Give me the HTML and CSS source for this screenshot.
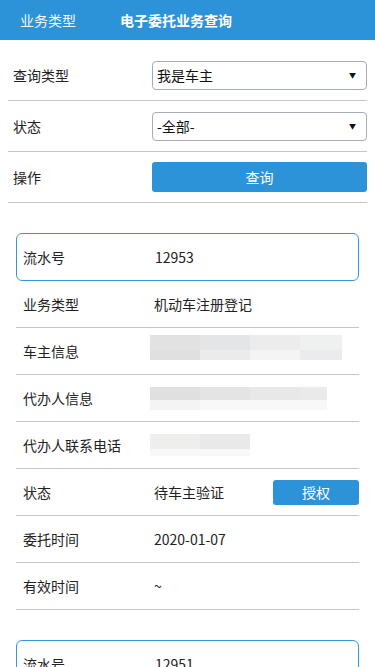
FILE: index.html
```html
<!DOCTYPE html>
<html lang="zh-CN">

<head>
    <meta charset="UTF-8">
    <meta name="viewport" content="width=device-width, initial-scale=1.0">
    <title>电子委托业务查询</title>
    <link rel="stylesheet" href="styles.css">
</head>

<body>
    <header class="cabecera">
        <span class="tab">业务类型</span>
        <span class="tab activo">电子委托业务查询</span>
    </header>

    <form class="filtro">
        <div class="fila">
            <label>查询类型</label>
            <div class="selector">
                <select>
                    <option>我是车主</option>
                    <option>我是代办人</option>
                </select>
            </div>
        </div>
        <div class="fila">
            <label>状态</label>
            <div class="selector">
                <select>
                    <option>-全部-</option>
                </select>
            </div>
        </div>
        <div class="fila">
            <label>操作</label>
            <button type="button" class="boton boton-ancho">查询</button>
        </div>
    </form>

    <section class="lista">
        <div class="registro">
            <div class="caja">
                <span class="nombre">流水号</span>
                <span class="valor">12953</span>
            </div>
            <div class="item">
                <span class="nombre">业务类型</span>
                <span class="valor">机动车注册登记</span>
            </div>
            <div class="item">
                <span class="nombre">车主信息</span>
                <span class="mosaico m-dueno">
                    <i></i><i></i><i></i><i></i>
                    <i></i><i></i><i></i><i></i>
                </span>
            </div>
            <div class="item">
                <span class="nombre">代办人信息</span>
                <span class="mosaico m-agente">
                    <i></i><i></i><i></i><i></i>
                    <i></i><i></i><i></i><i></i>
                </span>
            </div>
            <div class="item">
                <span class="nombre">代办人联系电话</span>
                <span class="mosaico m-tel">
                    <i></i><i></i>
                    <i></i><i></i>
                </span>
            </div>
            <div class="item">
                <span class="nombre">状态</span>
                <span class="valor">待车主验证</span>
                <button type="button" class="boton boton-chico">授权</button>
            </div>
            <div class="item">
                <span class="nombre">委托时间</span>
                <span class="valor">2020-01-07</span>
            </div>
            <div class="item">
                <span class="nombre">有效时间</span>
                <span class="valor">~</span>
            </div>
        </div>

        <div class="registro">
            <div class="caja">
                <span class="nombre">流水号</span>
                <span class="valor">12951</span>
            </div>
            <div class="item">
                <span class="nombre">业务类型</span>
                <span class="valor">机动车注册登记</span>
            </div>
        </div>
    </section>
</body>

</html>
```

FILE: styles.css
```css
body {
    margin: 0;
    font-family: "Noto Sans CJK SC", "Noto Sans", sans-serif;
    font-size: 14px;
    color: #222;
    background: #fff;
}
.cabecera {
    height: 40px;
    background: #2d93d9;
    display: flex;
    align-items: center;
    padding-left: 20px;
    gap: 44px;
}
.tab {
    color: #f2f7fc;
    font-size: 14px;
}
.activo {
    color: #fff;
    font-weight: bold;
}
.filtro {
    margin: 10px 8px 0;
}
.fila {
    height: 50px;
    border-bottom: 1px solid #c6c6c6;
    display: flex;
    align-items: center;
}
.fila label {
    width: 139px;
    padding-left: 5px;
}
.selector {
    flex: 1;
    position: relative;
}
.selector select {
    width: 100%;
    height: 29px;
    margin: 0;
    padding: 0 4px;
    border: 1px solid #a6acb6;
    border-radius: 4px;
    background: #fff;
    font: inherit;
    color: #111;
    appearance: none;
    -webkit-appearance: none;
}
.selector::after {
    content: "▼";
    position: absolute;
    right: 11px;
    top: 9px;
    font-size: 7px;
    color: #111;
    pointer-events: none;
}
.boton {
    border: 0;
    background: #2d93d9;
    color: #fff;
    font: inherit;
    border-radius: 3px;
    padding: 0;
}
.boton-ancho {
    flex: 1;
    height: 30px;
}
.boton-chico {
    width: 86px;
    height: 25px;
    margin-left: auto;
}
.lista {
    margin: 30px 16px 0;
}
.registro {
    margin-bottom: 30px;
}
.caja,
.item {
    display: flex;
    align-items: center;
}
.caja {
    height: 46px;
    border: 1px solid #3a96db;
    border-radius: 6px;
}
.item {
    height: 46px;
    border-bottom: 1px solid #c6c6c6;
}
.nombre {
    width: 132px;
    padding-left: 6px;
    flex-shrink: 0;
}
.item .nombre {
    padding-left: 7px;
    width: 131px;
}
.mosaico {
    display: grid;
    grid-template-columns: repeat(4, 50px);
    margin-left: -4px;
}
.mosaico i {
    display: block;
}
.m-dueno {
    grid-template-columns: 50px 50px 50px 42px;
    grid-template-rows: 15px 10px;
    margin-top: -8px;
}
.m-dueno i:nth-child(1) { background: #e2e2e2; }
.m-dueno i:nth-child(2) { background: #e4e5e7; }
.m-dueno i:nth-child(3) { background: #ececec; }
.m-dueno i:nth-child(4) { background: #eff0f0; }
.m-dueno i:nth-child(5) { background: #e0e0e0; }
.m-dueno i:nth-child(6) { background: #ebebeb; }
.m-dueno i:nth-child(7) { background: #f3f4f4; }
.m-dueno i:nth-child(8) { background: #eaebed; }
.m-agente {
    grid-template-columns: 50px 50px 50px 27px;
    grid-template-rows: 13px 10px;
}
.m-agente i:nth-child(1) { background: #e0e0e0; }
.m-agente i:nth-child(2) { background: #e4e4e4; }
.m-agente i:nth-child(3) { background: #e8e8e8; }
.m-agente i:nth-child(4) { background: #eaeaea; }
.m-agente i:nth-child(5) { background: #f3f4f3; }
.m-agente i:nth-child(n+6) { background: #f8f8f8; }
.m-tel {
    grid-template-columns: 50px 50px;
    grid-template-rows: 15px 7px;
}
.m-tel i:nth-child(1) { background: #eeeeed; }
.m-tel i:nth-child(2) { background: #e9e9e9; }
.m-tel i:nth-child(n+3) { background: #f8f8f8; }
```
